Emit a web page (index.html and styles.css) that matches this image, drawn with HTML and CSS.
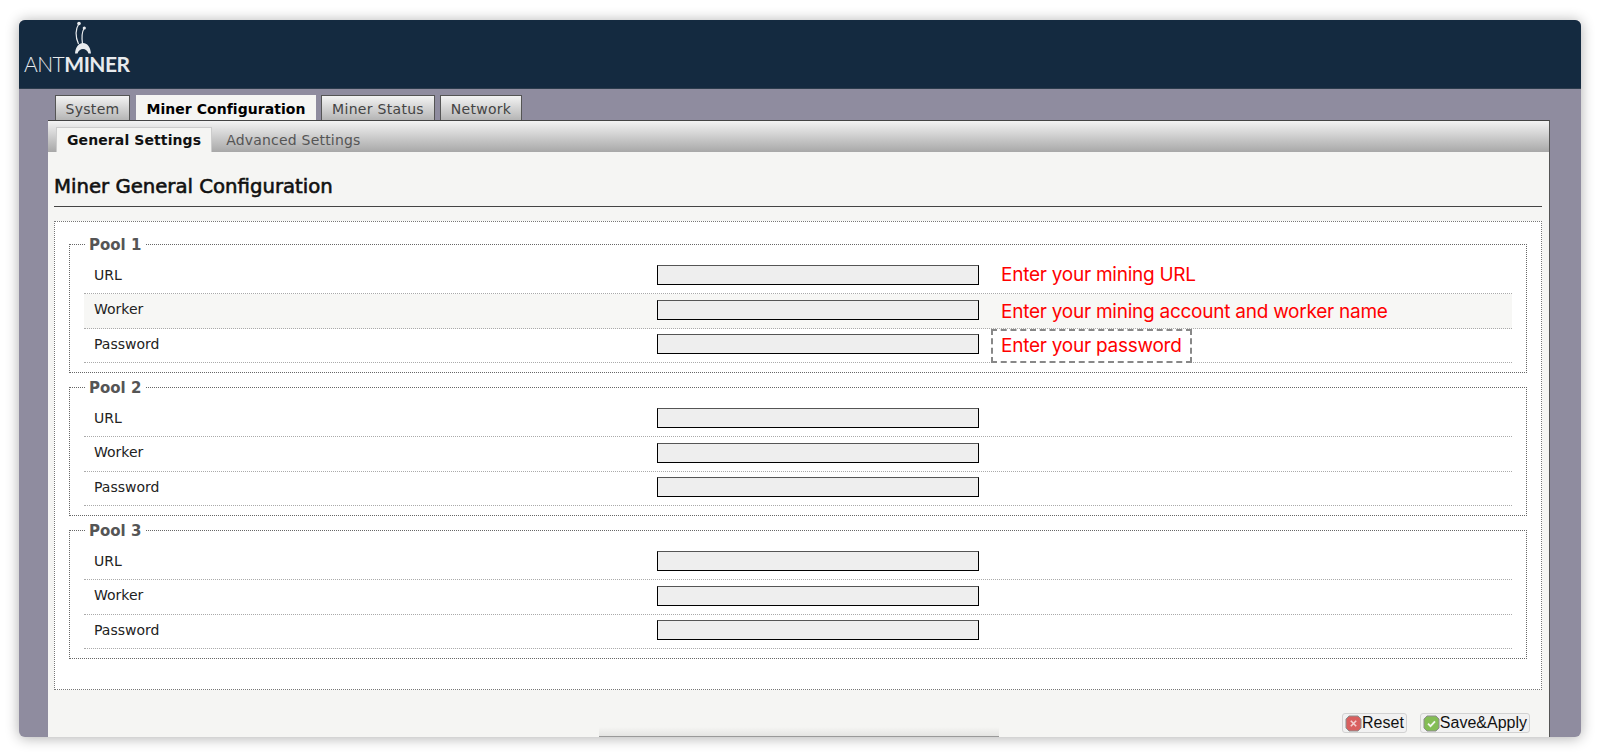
FILE: index.html
```html
<!DOCTYPE html>
<html lang="en">
<head>
<meta charset="utf-8">
<title>Antminer</title>
<link rel="stylesheet" href="styles.css">
</head>
<body>
<div class="window">
  <header class="header">
    <div class="logo">
      <svg class="ant" width="22" height="33" viewBox="0 0 22 33">
        <path d="M7 2.5C3.5 8 3 15 6.5 23" fill="none" stroke="#e8ebee" stroke-width="1.2"/>
        <path d="M12 7.5C10 11 9.5 16 10.5 23" fill="none" stroke="#e8ebee" stroke-width="1.2"/>
        <circle cx="7" cy="2.5" r="1.8" fill="#e8ebee"/>
        <circle cx="12.3" cy="7" r="1.6" fill="#e8ebee"/>
        <path d="M3 32.5C3.5 26 7 22 11 22C15 22 18.5 26 19 32.5L16.5 32.5C15.5 29.5 13.5 28 11 28C8.5 28 6.5 29.5 5.5 32.5Z" fill="#e8ebee"/>
      </svg>
      <div class="wordmark"><span class="ant-word">ANT</span><span class="miner-word">MINER</span></div>
    </div>
  </header>
  <nav class="tabs">
    <a class="tab tab-system">System</a>
    <a class="tab tab-config active">Miner Configuration</a>
    <a class="tab tab-status">Miner Status</a>
    <a class="tab tab-network">Network</a>
  </nav>
  <main class="panel">
    <div class="subnav">
      <a class="subtab active">General Settings</a>
      <a class="subtab">Advanced Settings</a>
    </div>
    <div class="content">
      <h2 class="title">Miner General Configuration</h2>
      <div class="box">
        <fieldset class="pool">
          <legend>Pool 1</legend>
          <div class="row"><label>URL</label><span class="field"></span><span class="note">Enter your mining URL</span></div>
          <div class="row hover"><label>Worker</label><span class="field"></span><span class="note">Enter your mining account and worker name</span></div>
          <div class="row"><label>Password</label><span class="field"></span><span class="note dashed">Enter your password</span></div>
        </fieldset>
        <fieldset class="pool">
          <legend>Pool 2</legend>
          <div class="row"><label>URL</label><span class="field"></span></div>
          <div class="row"><label>Worker</label><span class="field"></span></div>
          <div class="row"><label>Password</label><span class="field"></span></div>
        </fieldset>
        <fieldset class="pool">
          <legend>Pool 3</legend>
          <div class="row"><label>URL</label><span class="field"></span></div>
          <div class="row"><label>Worker</label><span class="field"></span></div>
          <div class="row"><label>Password</label><span class="field"></span></div>
        </fieldset>
      </div>
      <div class="actions">
        <button class="btn">
          <svg width="17" height="17" viewBox="0 0 17 17"><path d="M4 1H13L16 4V13L13 16H4L1 13V4Z" fill="#d9605f" stroke="#8d8d8d"/><path d="M5.8 5.8L11.2 11.2M11.2 5.8L5.8 11.2" stroke="#f3d0d0" stroke-width="1.6"/></svg>Reset
        </button>
        <button class="btn">
          <svg width="17" height="17" viewBox="0 0 17 17"><path d="M4 1H13L16 4V13L13 16H4L1 13V4Z" fill="#84bd55" stroke="#8d8d8d"/><path d="M5 8.7L7.5 11.2L12 6.3" fill="none" stroke="#f2f7ec" stroke-width="1.8"/></svg>Save&amp;Apply
        </button>
      </div>
    </div>
  </main>
  <div class="dock-edge"></div>
</div>
</body>
</html>
```
FILE: styles.css
```css
* { box-sizing: border-box; }
html, body { margin: 0; height: 756px; overflow: hidden; background: #fff; }
body { padding: 20px 19px 0; font-family: "DejaVu Sans", sans-serif; color: #111; }

.window {
  position: relative;
  height: 717px;
  display: flex;
  flex-direction: column;
  background: #8f8c9f;
  border-radius: 6px;
  overflow: hidden;
  box-shadow: 0 1px 14px rgba(0, 0, 0, .32);
}

.header { flex: none; height: 69px; background: #142a40; border-bottom: 1px solid #2c3c4d; padding: 1px 0 0 5px; }
.logo { display: flex; flex-direction: column; align-items: flex-start; width: 106px; }
.ant { display: block; margin-left: 48px; }
.wordmark { font-family: Lato, sans-serif; font-size: 21px; line-height: 20px; color: #e8ebee; white-space: nowrap; letter-spacing: -.5px; }
.ant-word { font-weight: 300; }
.miner-word { font-weight: 700; }

.tabs { flex: none; display: flex; gap: 5px; height: 31px; padding: 6px 0 0 36px; }
.tab {
  display: flex; align-items: center; justify-content: center;
  flex: none; height: 25px; padding-top: 2px;
  font-size: 14px; letter-spacing: .3px; color: #444;
  background: linear-gradient(#f3f3f3, #b5b5b5);
  border: 1px solid #555; border-bottom: 0;
}
.tab-system { width: 75px; margin-right: 1px; }
.tab-config { width: 180px; }
.tab-status { width: 114px; }
.tab-network { width: 82px; }
.tab.active { background: #f5f5f3; color: #000; font-weight: bold; letter-spacing: .05px; border-color: #f5f5f3; }

.panel {
  flex: 1; min-height: 0;
  margin: 0 31px 0 29px;
  display: flex; flex-direction: column;
  background: #f5f5f3;
  border-top: 1px solid #444;
  border-right: 1px solid #555;
}

.subnav {
  flex: none; height: 31px;
  display: flex; align-items: flex-end; padding-left: 8px;
  background: linear-gradient(#f3f3f3, #a8a8a8);
}
.subtab { display: flex; align-items: center; height: 25px; padding: 0 10px; font-size: 14px; color: #555; letter-spacing: .2px; }
.subtab.active { background: #f5f5f3; color: #111; font-weight: bold; letter-spacing: .1px; border: 1px solid #ccc; border-bottom: 0; margin-right: 4px; }

.content { flex: 1; padding: 0 7px 0 6px; display: flex; flex-direction: column; }
.title {
  flex: none; margin: 0; height: 55px; padding-top: 24px;
  font-size: 19.7px; line-height: 22px; font-weight: 400; color: #111;
  -webkit-text-stroke: .6px #111;
  border-bottom: 1px solid #444;
}

.box {
  flex: none; height: 469px; margin-top: 14px;
  padding: 13px 14px 0;
  background: #fff;
  border: 1px dotted #777;
}

.pool {
  display: block; margin: 0 0 5px; padding: 6.5px 14px 0;
  height: 138px;
  border: 1px dotted #666;
  min-width: 0;
}
.pool legend {
  margin-left: 1px; padding: 2px 4px 0;
  font-size: 15px; line-height: 16px; font-weight: bold; color: #555;
}

.row {
  position: relative;
  height: 34.5px;
  display: flex; align-items: center;
  padding-left: 10px;
  border-bottom: 1px dotted #aaa;
  font-size: 14px;
}
.row.hover { background: #f7f7f5; }
.row label { flex: none; width: 563px; margin-top: -3px; color: #222; }
.field {
  flex: none; width: 322px; height: 20px; margin-top: -2px;
  background: #eee;
  border: 1px solid #000; border-top-color: #555;
}
.note {
  margin: -2px 0 0 19px; padding: 0 3px;
  font-family: Inter, sans-serif; font-size: 19px; line-height: 24px;
  letter-spacing: -.25px; color: #f00; background: #fff; white-space: nowrap;
}
.row.hover .note { background: #f7f7f5; transform: translateY(2px); }
.note.dashed {
  position: absolute; left: 907px; top: 0; margin: 0; height: 34px;
  padding: 3px 8px 0 8px;
  border: 2px dashed #888; background: #fff;
}

.actions { flex: 1; display: flex; justify-content: flex-end; align-items: flex-start; gap: 13px; padding: 23px 12px 0 0; }
.btn {
  display: flex; align-items: center; height: 20px; padding: 0 2px;
  font-family: "Liberation Sans", sans-serif; font-size: 16px; color: #111;
  background: #f1f1f1; border: 1px solid #d2d2d2; border-radius: 3px;
}
.btn svg { margin-right: 0; }

.dock-edge {
  position: absolute; left: 580px; bottom: 0; width: 400px; height: 10px;
  background: linear-gradient(transparent, rgba(0, 0, 0, .07));
  border-bottom: 1px solid #999;
}
```
